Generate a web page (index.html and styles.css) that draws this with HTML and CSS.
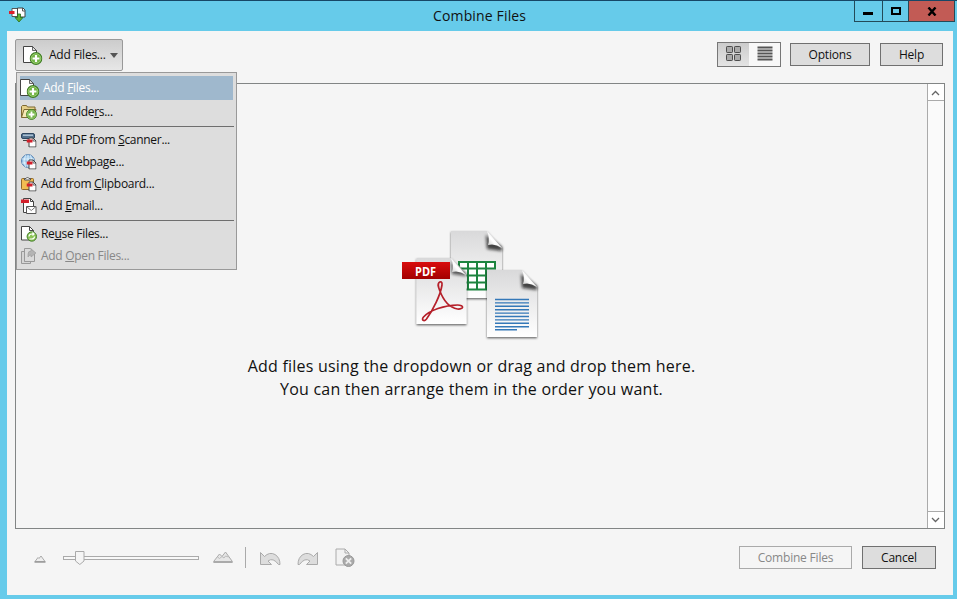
FILE: index.html
```
<!DOCTYPE html>
<html lang="en">
<head>
    <meta charset="UTF-8">
    <meta name="viewport" content="width=device-width, initial-scale=1.0">
    <title>Combine Files</title>
    <link rel="stylesheet" href="styles.css">
</head>
<body>
    <svg class="defs" width="0" height="0">
        <defs>
            <linearGradient id="paper" x1="0" y1="0" x2="0" y2="1">
                <stop offset="0" stop-color="#d9d9da"/>
                <stop offset="1" stop-color="#ffffff"/>
            </linearGradient>
            <linearGradient id="curl" x1="0" y1="1" x2="1" y2="0">
                <stop offset="0" stop-color="#bbb"/>
                <stop offset=".4" stop-color="#fff"/>
                <stop offset="1" stop-color="#ddd"/>
            </linearGradient>
            <linearGradient id="red" x1="0" y1="0" x2="0" y2="1">
                <stop offset="0" stop-color="#d90d0d"/>
                <stop offset="1" stop-color="#a30000"/>
            </linearGradient>
            <filter id="shadow" x="-20%" y="-20%" width="140%" height="140%">
                <feDropShadow dx="0" dy="1.2" stdDeviation="1" flood-color="#000" flood-opacity=".6"/>
            </filter>
            <filter id="soft" x="-50%" y="-50%" width="200%" height="200%">
                <feGaussianBlur stdDeviation="1.6"/>
            </filter>
            <symbol id="plus" viewBox="0 0 12 12">
                <circle cx="6" cy="6" r="5.4" fill="#71b344" stroke="#3f7d25"/>
                <circle cx="6" cy="6" r="4.4" fill="none" stroke="#a5d37f" stroke-width=".7"/>
                <path d="M6 2.8v6.4M2.8 6h6.4" stroke="#fff" stroke-width="2"/>
            </symbol>
            <symbol id="add-file" viewBox="0 0 20 20">
                <path d="M.5 1.5h9l4 4v12H.5z" fill="#fff" stroke="#444"/>
                <path d="M9.5 1.5v4h4z" fill="#ddd" stroke="#444" stroke-width=".8"/>
                <use href="#plus" x="6.5" y="7" width="13" height="13"/>
            </symbol>
            <symbol id="mini-pdf" viewBox="0 0 10 11">
                <path d="M2.5 1.5h4l3 3v6h-7z" fill="#fff" stroke="#444"/>
                <path d="M6.5 1.5v3h3" fill="none" stroke="#444" stroke-width=".8"/>
                <path d="M0 3h6v3H0z" fill="#d3202b"/>
            </symbol>
        </defs>
    </svg>

    <div class="window">
        <header class="titlebar">
            <svg class="app-icon" width="18" height="16" viewBox="0 0 18 16">
                <path d="M3 1.500h6v8H3z" fill="#fff" stroke="#555"/>
                <path d="M8.500 1h5.500l2 2v7H8.500z" fill="#fff" stroke="#444"/>
                <path d="M13.500 1v3H16" fill="none" stroke="#555"/>
                <path d="M0 4h5.500v3H0z" fill="#dc1f2b"/>
                <path d="M8.500 7h3v3.500H14L10 15 6 10.500h2.500z" fill="#61b035" stroke="#286c1b" stroke-width=".8"/>
            </svg>
            <h1>Combine Files</h1>
            <div class="window-buttons">
                <span class="win-btn minimize"><i></i></span>
                <span class="win-btn maximize"><i></i></span>
                <span class="win-btn close">
                    <svg width="10" height="9" viewBox="0 0 10 9"><path d="M1.500 .5l7 8M8.500 .5l-7 8" stroke="#000" stroke-width="2.400"/></svg>
                </span>
            </div>
        </header>

        <main class="content">
            <div class="toolbar">
                <div class="dropdown">
                    <button class="add-button">
                        <svg width="20" height="20"><use href="#add-file"/></svg>
                        <span>Add Files...</span>
                        <i class="caret"></i>
                    </button>
                    <ul class="menu">
                        <li class="selected"><svg width="20" height="20"><use href="#add-file"/></svg><span>Add <u>F</u>iles...</span></li>
                        <li>
                            <svg width="16" height="16" viewBox="0 0 16 16">
                                <path d="M.5 13.500V2.500l1-1h4l1 1.500h7.500v3" fill="#e6d08a" stroke="#7d6931"/>
                                <path d="M.5 13.500l2.500-8h12l-2 8z" fill="#f5e9b5" stroke="#7d6931"/>
                                <use href="#plus" x="5" y="5" width="11" height="11"/>
                            </svg>
                            <span>Add Folde<u>r</u>s...</span>
                        </li>
                        <li class="separator"></li>
                        <li>
                            <svg width="16" height="16" viewBox="0 0 16 16">
                                <rect x=".5" y="1.500" width="13" height="5" rx="1.500" fill="#52708d" stroke="#2e4660"/>
                                <path d="M2 3.200h10" stroke="#bfd3e4" stroke-width="1.200"/>
                                <path d="M2 8.500h8" stroke="#444"/>
                                <use href="#mini-pdf" x="5.500" y="4.500" width="10" height="11"/>
                            </svg>
                            <span>Add PDF from <u>S</u>canner...</span>
                        </li>
                        <li>
                            <svg width="16" height="16" viewBox="0 0 16 16">
                                <circle cx="7" cy="7" r="6.400" fill="#a5cdee" stroke="#4b7aae"/>
                                <path d="M1 5h12M1 9h12M7 .6v13M4.500 1.200Q1.500 7 4.500 13M9.500 1.200Q12.500 7 9.500 13" fill="none" stroke="#e9f5fd" stroke-width=".8"/>
                                <use href="#mini-pdf" x="5.500" y="4.500" width="10" height="11"/>
                            </svg>
                            <span>Add <u>W</u>ebpage...</span>
                        </li>
                        <li>
                            <svg width="16" height="16" viewBox="0 0 16 16">
                                <rect x=".5" y="2.500" width="12" height="11" rx="1" fill="#f1bd52" stroke="#91682a"/>
                                <path d="M3.500 4V2.500h1.500q1.500-3 3 0h1.500V4z" fill="#eee" stroke="#555"/>
                                <use href="#mini-pdf" x="5.500" y="4.500" width="10" height="11"/>
                            </svg>
                            <span>Add from <u>C</u>lipboard...</span>
                        </li>
                        <li>
                            <svg width="16" height="16" viewBox="0 0 16 16">
                                <path d="M2.500 .5h7l3 3v11h-10z" fill="#fff" stroke="#444"/>
                                <path d="M9.500 .5v3h3" fill="none" stroke="#444"/>
                                <path d="M0 1.500h8v3.500H0z" fill="#d3202b"/>
                                <path d="M5.500 8.500h9.500v7H5.500z" fill="#fff" stroke="#555"/>
                                <path d="M5.500 8.500l4.800 4 4.700-4" fill="none" stroke="#777"/>
                            </svg>
                            <span>Add <u>E</u>mail...</span>
                        </li>
                        <li class="separator"></li>
                        <li>
                            <svg width="16" height="16" viewBox="0 0 16 16">
                                <path d="M.5 .5h8l4 4v9.500H.5z" fill="#fff" stroke="#444"/>
                                <path d="M8.500 .5v4h4" fill="none" stroke="#444"/>
                                <circle cx="10.800" cy="10.500" r="4.700" fill="#8bc456" stroke="#44802a"/>
                                <path d="M8 10.500q0-2.500 3-2.500h2M11.500 6.500l1.500 1.500-1.500 1.500M13.500 10.500q0 2.500-3 2.500h-2" fill="none" stroke="#fff" stroke-width="1.200"/>
                            </svg>
                            <span>Re<u>u</u>se Files...</span>
                        </li>
                        <li class="disabled">
                            <svg width="16" height="16" viewBox="0 0 16 16">
                                <path d="M.5 3.500h3v10h6v2h-9z" fill="#d5d5d5" stroke="#999"/>
                                <path d="M3.500 .5h6l4 4v9h-10z" fill="#dadada" stroke="#999"/>
                                <path d="M7 6q0-3 3-3V.8L15 5l-5 4V7Q8 7 7 9z" fill="#b4b4b4" stroke="#999" stroke-width=".6"/>
                            </svg>
                            <span>Add <u>O</u>pen Files...</span>
                        </li>
                    </ul>
                </div>
                <div class="toolbar-right">
                    <div class="view-toggle">
                        <span class="view active">
                            <svg width="16" height="16" viewBox="0 0 16 16" fill="#aaa" stroke="#4d4d4d">
                                <rect x=".5" y=".5" width="6" height="6" rx=".7"/><rect x="8.500" y=".5" width="6" height="6" rx=".7"/>
                                <rect x=".5" y="8.500" width="6" height="6" rx=".7"/><rect x="8.500" y="8.500" width="6" height="6" rx=".7"/>
                            </svg>
                        </span>
                        <span class="view">
                            <svg width="16" height="16" viewBox="0 0 16 16"><path d="M.5 1.500h15M.5 4.500h15M.5 7.500h15M.5 10.500h15M.5 13.500h15" stroke="#555" stroke-width="1.900"/></svg>
                        </span>
                    </div>
                    <button class="btn options">Options</button>
                    <button class="btn help">Help</button>
                </div>
            </div>

            <div class="file-area">
                <div class="drop-zone">
                    <svg width="146" height="118" viewBox="398 226 146 118">
                        <g filter="url(#shadow)">
                            <path d="M451 231h36l15 16v51h-51z" fill="url(#paper)"/>
                        </g>
                        <path d="M486 235l1 14 15 2v-4z" fill="#111" opacity=".75" filter="url(#soft)"/>
                        <path d="M487 231q3 7 1 14 7-2 14 3z" fill="url(#curl)"/>
                        <path d="M459 262h36v6.500h-36zM459 268.500h27v21h-27zM468 262v28M477 262v28M486 262v28M459 275.500h27M459 282.500h27" fill="#fff" stroke="#1d843f" stroke-width="2"/>
                        <g filter="url(#shadow)">
                            <path d="M416.500 258h35l15 16v50h-50z" fill="url(#paper)"/>
                        </g>
                        <path d="M451 262l1 12 14 2v-3z" fill="#111" opacity=".65" filter="url(#soft)"/>
                        <path d="M451 258q3 7 1 14 7-2 14 3z" fill="url(#curl)"/>
                        <path d="M402 262h48v17h-48z" fill="url(#red)"/>
                        <text x="415" y="275.500" class="pdf-label" textLength="21" lengthAdjust="spacingAndGlyphs">PDF</text>
                        <path d="M439 282.500c1.500-1.500 3.500-.5 3 2.500-1.500 10-9 25-15.500 34-2.500 3-5.500 1-3-2 6-6.500 21-12 34-12 7 0 6.500 4.500 0 4-9-1.500-14.500-9.500-18-19-1.500-4-2-5.500-.5-7.500z" fill="none" stroke="#b5202a" stroke-width="1.700"/>
                        <g filter="url(#shadow)">
                            <path d="M487 270h35l15 16v51h-50z" fill="url(#paper)"/>
                        </g>
                        <path d="M521 274l1 14 15 2v-4z" fill="#111" opacity=".75" filter="url(#soft)"/>
                        <path d="M522 270q3 7 1 14 7-2 14 3z" fill="url(#curl)"/>
                        <path d="M495 299.500h34M495 302.900h34M495 306.300h34M495 309.700h34M495 313.100h34M495 316.500h34M495 319.900h34M495 323.300h34M495 326.700h34M495 329.700h22" stroke="#3478b8" stroke-width="1.400"/>
                    </svg>
                    <p>Add files using the dropdown or drag and drop them here.</p>
                    <p>You can then arrange them in the order you want.</p>
                </div>
                <div class="scrollbar">
                    <span class="arrow up"><svg width="9" height="6" viewBox="0 0 9 6"><path d="M1 5l3.500-3.500L8 5" fill="none" stroke="#666" stroke-width="1.300"/></svg></span>
                    <span class="arrow down"><svg width="9" height="6" viewBox="0 0 9 6"><path d="M1 1l3.500 3.500L8 1" fill="none" stroke="#666" stroke-width="1.300"/></svg></span>
                </div>
            </div>

            <footer class="bottom-bar">
                <svg class="mountain-small" width="12" height="8" viewBox="0 0 12 8"><path d="M1 6.500L4 2.500l1 1L7 1l4 5.500z" fill="#eee" stroke="#aaa"/><path d="M.5 7h11" stroke="#999" stroke-width="1.500"/></svg>
                <div class="slider"><svg class="thumb" width="10" height="14" viewBox="0 0 10 14"><path d="M.5 .5h8.500V10l-4.200 3.500L.5 10z" fill="#f5f5f5" stroke="#aaa"/></svg></div>
                <svg class="mountain-large" width="20" height="13" viewBox="0 0 20 13"><path d="M1 10L6.500 3 9 5.500 12.500 1 19 10v1.500H1z" fill="#e6e6e6" stroke="#aaa"/><path d="M4.500 6l2 1.500L9 5.500l2 1.500 1.500-2 3 1" fill="none" stroke="#bbb"/><path d="M.5 11h19" stroke="#aaa" stroke-width="2"/></svg>
                <i class="divider"></i>
                <svg class="undo" width="21" height="15" viewBox="0 0 21 15"><path d="M.5 1.500v12h11L8 10q5-4 10.500 3.500h1.500q0-7-5-10-5.500-3-10.500 2z" fill="#ddd" stroke="#aaa"/></svg>
                <svg class="redo" width="21" height="15" viewBox="0 0 21 15"><path d="M20.500 1.500v12h-11L13 10q-5-4-10.500 3.500H1q0-7 5-10 5.500-3 10.500 2z" fill="#ddd" stroke="#aaa"/></svg>
                <svg class="remove" width="20" height="20" viewBox="0 0 20 20">
                    <path d="M1 1h9l4 4v12H1z" fill="#f2f2f2" stroke="#aaa"/>
                    <path d="M10 1v4h4" fill="none" stroke="#aaa"/>
                    <circle cx="13.500" cy="13" r="5.500" fill="#aaa" stroke="#999"/>
                    <path d="M10.800 10.300l5.400 5.400M16.200 10.300l-5.400 5.400" stroke="#eee" stroke-width="1.800"/>
                </svg>
                <div class="actions">
                    <button class="btn combine" disabled>Combine Files</button>
                    <button class="btn cancel">Cancel</button>
                </div>
            </footer>
        </main>
    </div>
</body>
</html>
```
FILE: styles.css
```
* {
    margin: 0;
    padding: 0;
    box-sizing: border-box;
}

body {
    width: 957px;
    height: 599px;
    overflow: hidden;
    font-family: 'Open Sans', 'Noto Sans', sans-serif;
    font-size: 12px;
    color: #111;
}

svg {
    display: block;
    flex: none;
}

.defs {
    position: absolute;
}

.window {
    height: 599px;
    background: #66cbea;
    border-top: 1px solid #174766;
    display: flex;
    flex-direction: column;
}

.titlebar {
    height: 30px;
    display: flex;
    flex: none;
    padding-left: 9px;
}

.app-icon {
    margin-top: 6px;
}

h1 {
    flex: 1;
    padding-left: 406px;
    font-size: 14px;
    font-weight: 400;
    line-height: 29px;
    letter-spacing: 0.15px;
    white-space: nowrap;
}

.window-buttons {
    display: flex;
    height: 21px;
    margin-right: 2px;
    border: 1px solid #234a58;
    border-top: 0;
}

.win-btn {
    width: 28px;
    display: flex;
    align-items: center;
    justify-content: center;
    border-right: 1px solid #234a58;
}

.minimize i {
    width: 10px;
    height: 3px;
    background: #000;
    margin: 5px 2px 0 0;
}

.maximize {
    width: 26px;
}

.maximize i {
    width: 10px;
    height: 8px;
    border: 2px solid #000;
}

.close {
    width: 45px;
    background: #c25b55;
    border-right: 0;
}

.content {
    flex: 1;
    margin: 0 4px 4px 7px;
    padding: 8px 8px 0;
    background: #f5f5f5;
}

.toolbar {
    height: 44px;
    display: flex;
    justify-content: space-between;
}

.dropdown {
    position: relative;
}

button {
    font-family: inherit;
    font-size: 12px;
    color: #111;
}

.add-button {
    width: 108px;
    height: 32px;
    display: flex;
    align-items: center;
    padding: 0 0 1px 7px;
    border: 1px solid #999;
    border-radius: 2px;
    background: linear-gradient(#ccc, #e7e7e7);
}

.add-button span {
    width: 61px;
    margin-left: 6px;
    text-align: left;
    letter-spacing: -0.25px;
    white-space: nowrap;
}

.caret {
    margin-top: 1px;
    border: 4px solid transparent;
    border-top: 5px solid #555;
    border-bottom: 0;
}

.menu {
    position: absolute;
    top: 33px;
    left: 1px;
    z-index: 5;
    width: 221px;
    height: 198px;
    padding: 3px 2px 0 3px;
    list-style: none;
    letter-spacing: -0.3px;
    background: #ddd;
    border: 1px solid #999;
}

.menu li {
    height: 22px;
    display: flex;
    align-items: center;
    gap: 4px;
    padding-left: 1px;
    white-space: nowrap;
}

.menu li span {
    padding-bottom: 2px;
}

.menu .selected {
    height: 24px;
    margin: 0 1px 1px 0;
    padding-left: 0;
    gap: 3px;
    background: #9fb8cd;
    color: #fff;
}

.menu .separator {
    height: 1px;
    margin: 3px 0 2px -1px;
    background: #6e6e6e;
}

.menu .disabled {
    color: #888;
}

u {
    text-underline-offset: 1px;
}

.toolbar-right {
    display: flex;
    align-items: flex-start;
    padding: 3px 2px 0 0;
}

.view-toggle {
    display: flex;
    width: 64px;
    height: 25px;
    border: 1px solid #777;
    background: #f8f8f8;
    margin-right: 9px;
}

.view {
    width: 31px;
    display: flex;
    align-items: center;
    justify-content: center;
    padding: 0 0 1px 1px;
}

.view.active {
    background: linear-gradient(#ccc, #e4e4e4);
}

.btn {
    height: 23px;
    letter-spacing: -0.2px;
    background: #ddd;
    border: 1px solid #707070;
}

.options {
    width: 80px;
    margin: 1px 10px 0 0;
}

.help {
    width: 63px;
    margin-top: 1px;
}

.file-area {
    height: 446px;
    width: 930px;
    display: flex;
    border: 1px solid #828585;
}

.drop-zone {
    flex: 1;
    padding-top: 142px;
    text-align: center;
    font-size: 16px;
    line-height: 23px;
    letter-spacing: 0.22px;
}

.drop-zone svg {
    margin: 0 auto 11px 382px;
}

.scrollbar {
    width: 17px;
    display: flex;
    flex-direction: column;
    justify-content: space-between;
    background: #fafafa;
    border-left: 1px solid #aaa;
}

.arrow {
    height: 17px;
    display: flex;
    align-items: center;
    justify-content: center;
    padding-right: 1px;
    background: #fff;
}

.up {
    padding-top: 2px;
    border-bottom: 1px solid #aaa;
}

.down {
    border-top: 1px solid #aaa;
}

.bottom-bar {
    height: 57px;
    display: flex;
    align-items: center;
    padding: 0 9px 0 19px;
}

.mountain-small {
    margin-top: 3px;
}

.slider {
    width: 136px;
    height: 4px;
    margin-left: 17px;
    border: 1px solid #aaa;
    background: #f8f8f8;
}

.thumb {
    margin: -6px 0 0 11px;
}

.mountain-large {
    margin-left: 14px;
}

.divider {
    width: 1px;
    height: 21px;
    margin-left: 12px;
    background: #aaa;
}

.undo {
    margin: 2px 0 0 14px;
}

.redo {
    margin: 2px 0 0 16px;
}

.remove {
    margin-left: 17px;
}

.actions {
    display: flex;
    gap: 10px;
    margin-left: auto;
}

.combine {
    width: 113px;
    color: #888;
    background: #f5f5f5;
    border-color: #aaa;
}

.cancel {
    width: 74px;
}

.pdf-label {
    font: bold 13px 'Open Sans', sans-serif;
    letter-spacing: 0;
    fill: #fff;
}
```
